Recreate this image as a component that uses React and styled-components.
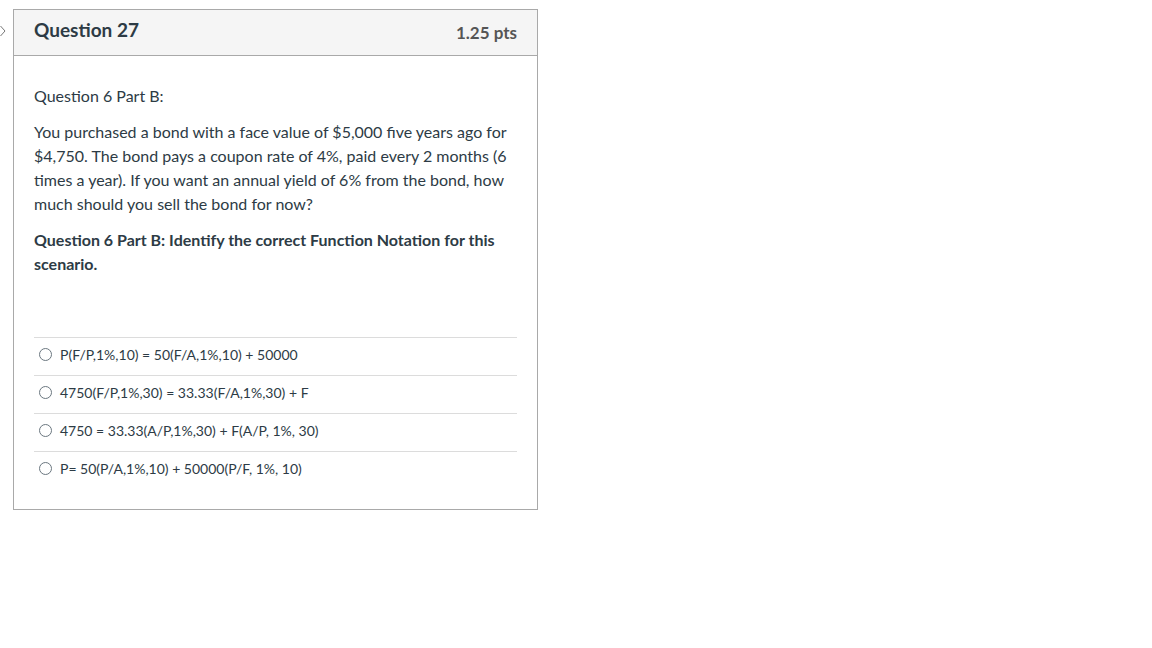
import React from "react";
import styled, { createGlobalStyle } from "styled-components";

const Global = createGlobalStyle`
  html, body { margin: 0; padding: 0; background: #fff; }
  body { font-family: Lato, "Noto Sans", sans-serif; color: #2d3b45; }
`;

const Page = styled.div`
  display: flex;
  align-items: flex-start;
  padding-top: 9px;
`;

const Marker = styled.div`
  width: 13px;
  height: 44px;
  display: flex;
  align-items: center;
  justify-content: flex-start;
`;

const Card = styled.div`
  width: 525px;
  box-sizing: border-box;
  border: 1px solid #a9a9a9;
  background: #fff;
`;

const Header = styled.div`
  height: 46px;
  box-sizing: border-box;
  background: #f5f5f5;
  border-bottom: 1px solid #a9a9a9;
  display: flex;
  align-items: center;
  justify-content: space-between;
  padding: 0 20px;
`;

const Title = styled.h2`
  margin: 0 0 6px 0;
  font-size: 19px;
  font-weight: 700;
  color: #2d3b45;
`;

const Points = styled.div`
  font-size: 17px;
  font-weight: 700;
  color: #555;
  padding-bottom: 1px;
`;

const Body = styled.div`
  padding: 28px 20px 20px 20px;
`;

const Para = styled.p`
  margin: 0 0 12px 0;
  font-size: 16px;
  line-height: 24px;
  font-weight: ${(p) => (p.$bold ? 700 : 400)};
  color: #2d3b45;
`;

const Answers = styled.div`
  margin-top: 61px;
`;

const Answer = styled.label`
  display: flex;
  align-items: center;
  height: 38px;
  box-sizing: border-box;
  border-top: 1px solid #dcdcdc;
  padding: 0 0 5px 5px;
  gap: 8px;
  font-size: 14px;
  color: #2d3b45;
`;

const Radio = styled.span`
  width: 11px;
  height: 11px;
  border: 1px solid #6b7780;
  border-radius: 50%;
  flex: none;
`;

const answers = [
  "P(F/P,1%,10) = 50(F/A,1%,10) + 50000",
  "4750(F/P,1%,30) = 33.33(F/A,1%,30) + F",
  "4750 = 33.33(A/P,1%,30) + F(A/P, 1%, 30)",
  "P= 50(P/A,1%,10) + 50000(P/F, 1%, 10)",
];

export default function App() {
  return (
    <>
      <Global />
      <Page>
        <Marker>
          <svg width="6" height="12" viewBox="0 0 6 12">
            <polyline points="0.5,1 5,6 0.5,11" fill="none" stroke="#777" strokeWidth="1" />
          </svg>
        </Marker>
        <Card>
          <Header>
            <Title>Question 27</Title>
            <Points>1.25 pts</Points>
          </Header>
          <Body>
            <Para>Question 6 Part B:</Para>
            <Para>
              You purchased a bond with a face value of $5,000 five years ago for
              $4,750. The bond pays a coupon rate of 4%, paid every 2 months (6
              times a year). If you want an annual yield of 6% from the bond, how
              much should you sell the bond for now?
            </Para>
            <Para $bold>
              Question 6 Part B: Identify the correct Function Notation for this
              scenario.
            </Para>
            <Answers>
              {answers.map((a) => (
                <Answer key={a}>
                  <Radio />
                  {a}
                </Answer>
              ))}
            </Answers>
          </Body>
        </Card>
      </Page>
    </>
  );
}
